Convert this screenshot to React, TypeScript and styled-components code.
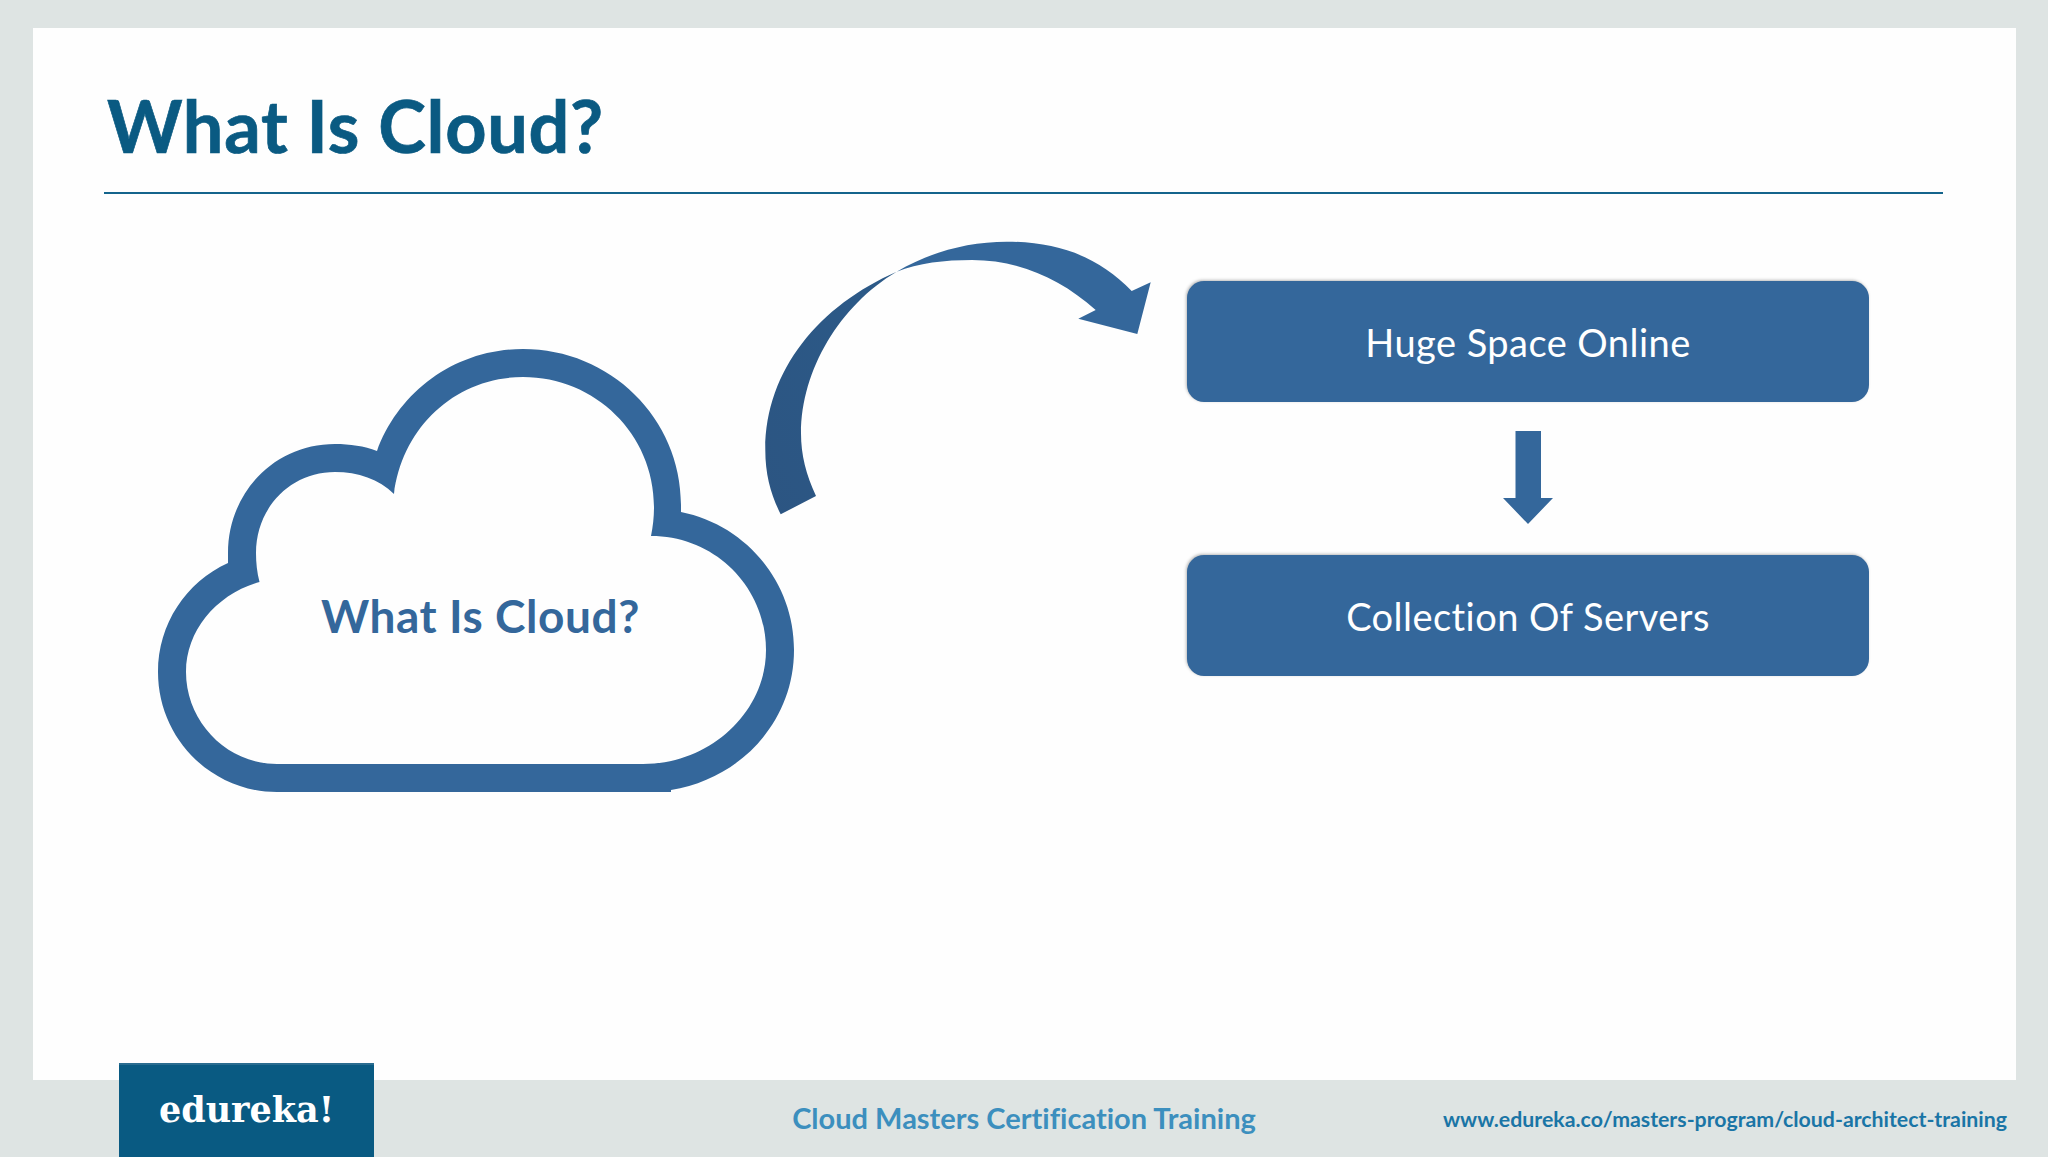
import React from 'react'
import styled, { createGlobalStyle } from 'styled-components'

const GlobalStyle = createGlobalStyle`
  html, body {
    margin: 0;
    padding: 0;
    background: #dee4e3;
  }
  body {
    font-family: Lato, "Liberation Sans", sans-serif;
    font-variant-ligatures: none;
  }
`

const Page = styled.div`
  width: 2048px;
  height: 1157px;
  display: flex;
  flex-direction: column;
  background: #dee4e3;
  overflow: hidden;
`

const Slide = styled.main`
  height: 1052px;
  margin: 28px 32px 0 33px;
  padding: 0 73px 0 71px;
  background: #fefefe;
  flex: none;
`

const Title = styled.h1`
  margin: 0;
  padding: 55px 0 0 3px;
  height: 109px;
  font-size: 72px;
  line-height: 84px;
  font-weight: 700;
  letter-spacing: 0.7px;
  -webkit-text-stroke: 0.7px #0a5a82;
  color: #0a5a82;
`

const Rule = styled.div`
  height: 2px;
  background: #14648c;
`

const Diagram = styled.section`
  display: flex;
  align-items: flex-start;
  padding: 47px 0 0 54px;
`

const CloudWrap = styled.div`
  position: relative;
  width: 636px;
  height: 443px;
  margin-top: 108px;
  flex: none;
`

const CloudLabel = styled.span`
  position: absolute;
  left: 163px;
  top: 240px;
  font-size: 46px;
  line-height: 54px;
  font-weight: 700;
  letter-spacing: 0.55px;
  color: #34679b;
  white-space: nowrap;
`

const CurvedArrow = styled.svg`
  width: 386px;
  height: 274px;
  margin-left: -29px;
  flex: none;
`

const Steps = styled.div`
  width: 682px;
  margin: 40px 0 0 36px;
  display: flex;
  flex-direction: column;
  align-items: center;
  flex: none;
`

const StepBox = styled.div`
  width: 100%;
  height: 121px;
  display: flex;
  align-items: center;
  justify-content: center;
  border-radius: 17px;
  background: #34679b;
  box-shadow: -1px -1px 3px rgba(60, 60, 60, 0.35);
  color: #fff;
  font-size: 38px;
  letter-spacing: 0.45px;
`

const DownArrow = styled.svg`
  width: 50px;
  height: 93px;
  margin: 29px 0 31px;
`

const Footer = styled.footer`
  flex: 1;
  display: grid;
  grid-template-columns: 1fr auto 1fr;
  align-items: start;
`

const Logo = styled.div`
  width: 255px;
  height: 94px;
  margin: -17px 0 0 119px;
  padding-top: 25px;
  box-sizing: border-box;
  position: relative;
  background: #095a82;
  border-top: 2px solid #2a6c90;
  color: #fff;
  font-family: "DejaVu Serif", serif;
  font-weight: 700;
  font-size: 35px;
  line-height: 40px;
  text-align: center;
`

const Course = styled.div`
  padding-top: 21px;
  font-size: 29px;
  line-height: 34px;
  font-weight: 700;
  color: #3c8fbe;
`

const Url = styled.div`
  padding: 25px 41px 0 0;
  text-align: right;
  font-size: 21.3px;
  line-height: 28px;
  font-weight: 700;
  color: #1a75a6;
`

const Cloud = () => (
  <svg width="636" height="443" viewBox="158 349 636 443">
    <path
      fill="#34679b"
      fillRule="evenodd"
      d="M277 792 L671 792 L671 790 C740 779 794 722 794 650 C794 582 746 525 681 512 L681 505 C681 418 610 349 523 349 C454 349 398 393 377 451 C364 446 350 444 335 444 C275 444 228 492 228 553 L228 563 C186 582 158 624 158 672 C158 738 211 792 277 792 Z M277 764 L643 764 C710 764 766 712 766 650 C766 588 716 536 651 536 C653 526 654 517 654 507 C654 434 595 377 523 377 C455 377 402 428 394 494 C379 479 358 472 335 472 C290 472 256 508 256 553 C256 563 257 572 259.5 582 C217 594 186 630 186 672 C186 722 227 764 277 764 Z"
    />
  </svg>
)

const App: React.FC = () => {
  return (
    <Page>
      <GlobalStyle />
      <Slide>
        <Title>What Is Cloud?</Title>
        <Rule />
        <Diagram>
          <CloudWrap>
            <Cloud />
            <CloudLabel>What Is Cloud?</CloudLabel>
          </CloudWrap>
          <CurvedArrow viewBox="765 241 386 274">
            <defs>
              <linearGradient id="tail" x1="0" y1="1" x2="1" y2="0">
                <stop offset="0" stopColor="#2c5582" />
                <stop offset="1" stopColor="#2c5a88" />
              </linearGradient>
            </defs>
            <path
              fill="url(#tail)"
              d="M896.7 271.7 C820 305 765 370 765.3 450 C765.3 475 771 495 780.7 514.3 L816 496 C806 475 801 455 801 433.3 C801 370 840 305 896.7 271.7 Z"
            />
            <path
              fill="#34679b"
              d="M896.7 271.7 C930 252 968 241.7 1006.7 241.7 C1060 241.7 1100 258 1131.7 291 L1150.7 282.3 L1137.3 334 L1078.3 318.7 L1095.7 310 C1060 278 1018 260 972 260 C945 260 918 263 896.7 271.7 Z"
            />
          </CurvedArrow>
          <Steps>
            <StepBox>Huge Space Online</StepBox>
            <DownArrow viewBox="0 0 50 93">
              <path fill="#34679b" d="M12.5 0 H38 V67 H50 L25 93 L0 67 H12.5 Z" />
            </DownArrow>
            <StepBox>Collection Of Servers</StepBox>
          </Steps>
        </Diagram>
      </Slide>
      <Footer>
        <Logo>edureka!</Logo>
        <Course>Cloud Masters Certification Training</Course>
        <Url>www.edureka.co/masters-program/cloud-architect-training</Url>
      </Footer>
    </Page>
  )
}

export default App
